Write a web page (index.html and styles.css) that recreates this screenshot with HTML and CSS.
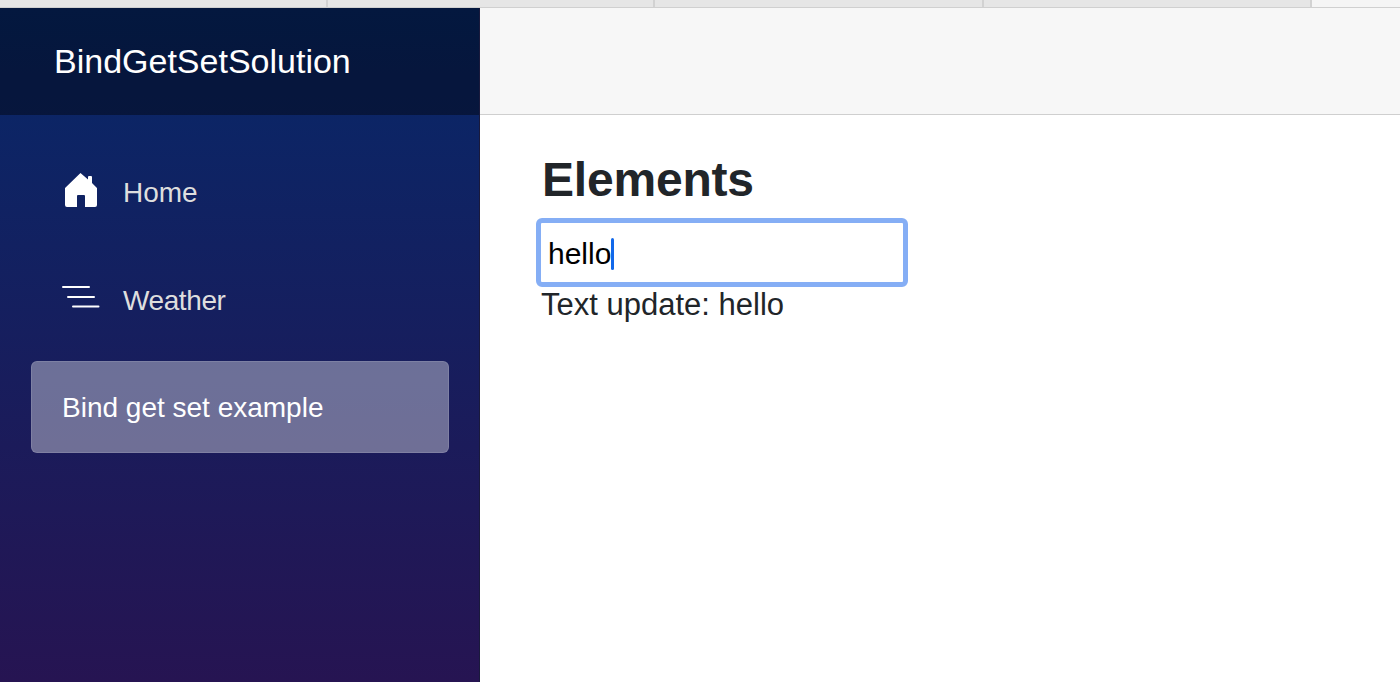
FILE: index.html
```html
<!DOCTYPE html>
<html lang="en">
<head>
    <meta charset="UTF-8">
    <meta name="viewport" content="width=device-width, initial-scale=1.0">
    <title>BindGetSetSolution</title>
    <link rel="stylesheet" href="styles.css">
</head>
<body>
    <div class="tab-strip">
        <div class="tab tab-first"></div>
        <div class="tab"></div>
        <div class="tab tab-wide"></div>
        <div class="tab tab-last"></div>
        <div class="tab-rest"></div>
    </div>
    <div class="page">
        <div class="sidebar">
            <div class="brand">BindGetSetSolution</div>
            <div class="nav">
                <a class="nav-link">
                    <svg class="nav-icon" width="38" height="38" viewBox="0 0 38 38">
                        <path d="M18.5 0 L26 6.6 V4 Q26 3 27 3 H29 Q30 3 30 4 V10 L35 15 V32 Q35 34 33 34 H23 V23 Q23 22 22 22 H16 Q15 22 15 23 V34 H5 Q3 34 3 32 V15 Z" fill="#ffffff"/>
                    </svg>
                    <span>Home</span>
                </a>
                <a class="nav-link">
                    <svg class="nav-icon" width="38" height="28" viewBox="0 0 38 28">
                        <g stroke="#ffffff" stroke-width="2" stroke-linecap="round">
                            <line x1="1" y1="1" x2="27" y2="1"/>
                            <line x1="6" y1="11" x2="32" y2="11"/>
                            <line x1="11" y1="20.5" x2="36.5" y2="20.5"/>
                        </g>
                    </svg>
                    <span class="tight-label">Weather</span>
                </a>
                <a class="nav-link active">Bind get set example</a>
            </div>
        </div>
        <div class="main">
            <div class="top-row"></div>
            <div class="content">
                <h1>Elements</h1>
                <div class="input-box">
                    <span class="input-text">hello</span><span class="caret"></span>
                </div>
                <div class="update-text">Text update: hello</div>
            </div>
        </div>
    </div>
</body>
</html>
```

FILE: styles.css
```css
html, body {
    height: 100%;
}
body {
    margin: 0;
    display: flex;
    flex-direction: column;
    font-family: "Liberation Sans", Arial, sans-serif;
    color: #212529;
    background-color: #ffffff;
    overflow: hidden;
}
.tab-strip {
    display: flex;
    height: 8px;
    flex-shrink: 0;
    background-color: #e6e6e6;
    border-bottom: 1px solid #d0d0d0;
    box-sizing: border-box;
}
.tab {
    width: 327px;
    box-sizing: border-box;
    border-right: 2px solid #d2d2d2;
}
.tab-first {
    width: 328px;
}
.tab-wide {
    width: 329px;
}
.tab-last {
    width: 328px;
}
.tab-rest {
    flex: 1;
    background-color: #f5f5f5;
}
.page {
    display: flex;
    flex: 1;
    min-height: 0;
}
.sidebar {
    width: 480px;
    flex-shrink: 0;
    box-sizing: border-box;
    border-right: 1px solid #1a1a3c;
    background-image: linear-gradient(180deg, #072869 0%, #261452 100%);
}
.brand {
    height: 107px;
    box-sizing: border-box;
    padding: 33px 0 0 54px;
    font-size: 34px;
    line-height: 40px;
    color: #ffffff;
    background-color: rgba(0, 0, 0, 0.4);
}
.nav {
    display: flex;
    flex-direction: column;
    gap: 15.5px;
    padding: 31px 30px 0 31px;
}
.nav-link {
    display: flex;
    align-items: center;
    height: 92px;
    box-sizing: border-box;
    padding: 2px 0 0 31px;
    font-size: 28px;
    color: #dedede;
    border-radius: 6px;
}
.nav-icon {
    flex-shrink: 0;
    margin: 0 23px 2px 0;
}
.tight-label {
    letter-spacing: -0.4px;
}
.nav-link.active {
    color: #ffffff;
    background-color: rgba(255, 255, 255, 0.37);
    border: 1px solid rgba(255, 255, 255, 0.12);
    padding-left: 30px;
}
.main {
    flex: 1;
    display: flex;
    flex-direction: column;
}
.top-row {
    height: 107px;
    box-sizing: border-box;
    background-color: #f7f7f7;
    border-bottom: 1px solid #cfcfcf;
}
.content {
    padding: 35px 0 0 56px;
}
h1 {
    margin: 0 0 8px 6px;
    font-size: 48px;
    line-height: 60px;
    letter-spacing: -0.2px;
    font-weight: bold;
    color: #212529;
}
.input-box {
    display: flex;
    align-items: center;
    width: 372px;
    height: 69px;
    box-sizing: border-box;
    padding: 2px 0 0 7px;
    background-color: #ffffff;
    border: 5px solid #85aef5;
    border-radius: 6px;
    font-size: 30px;
    color: #000000;
}
.caret {
    width: 3px;
    height: 32px;
    background-color: #1168ea;
    border-radius: 2px;
}
.update-text {
    margin-left: 5px;
    font-size: 31px;
    line-height: 35px;
    color: #212529;
}
```
